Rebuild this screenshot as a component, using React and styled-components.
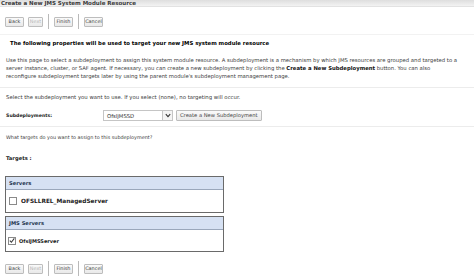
import React from "react";
import styled, { createGlobalStyle } from "styled-components";

const Global = createGlobalStyle`
  html, body { margin: 0; padding: 0; background: #fff; }
  body { font-family: "DejaVu Sans", Tahoma, sans-serif; color: #333; }
  * { box-sizing: border-box; }
`;

const Page = styled.div`
  width: 474px;
  height: 276px;
  overflow: hidden;
  display: flex;
  flex-direction: column;
`;

const TitleBar = styled.div`
  height: 11px;
  padding-left: 1px;
  display: flex;
  align-items: center;
  background: linear-gradient(#dedede, #f3f3f3);
  border-bottom: 1px solid #e2e2e2;
  font-size: 5.5px;
  font-weight: bold;
  color: #3a3a3a;
  white-space: nowrap;
`;

const ButtonBar = styled.div`
  display: flex;
  align-items: center;
  gap: 4px;
  padding: ${(p) => p.$pad};
`;

const Btn = styled.button`
  height: 10px;
  width: ${(p) => p.$w}px;
  padding: 0;
  font-family: inherit;
  font-size: 4.9px;
  line-height: 1;
  color: ${(p) => (p.disabled ? "#b5b5b5" : "#444")};
  background: linear-gradient(#fafafa, #e9e9e9);
  border: 1px solid #bdbdbd;
  border-radius: 1px;
  white-space: nowrap;
`;

const Sep = styled.span`
  width: 1px;
  height: 15px;
  margin: 0 1px;
  background: #b9b9b9;
`;

const Heading = styled.div`
  margin-top: 5px;
  padding: 5px 10px 5px;
  border-top: 1px solid #f2f2f2;
  font-size: 5.35px;
  font-weight: bold;
  color: #000;
  white-space: nowrap;
`;

const Body = styled.div`
  padding: 0 6px;
  display: flex;
  flex-direction: column;
`;

const Para = styled.div`
  margin-top: 5px;
  display: flex;
  flex-direction: column;
`;

const ParaLine = styled.div`
  font-size: 5.3px;
  line-height: 8px;
  height: 8px;
  color: #3b3b3b;
  white-space: nowrap;
`;

const Bold = styled.b`
  color: #111;
`;

const Divider = styled.div`
  height: 1px;
  background: #ececec;
  margin: ${(p) => p.$m};
`;

const Line = styled.div`
  font-size: ${(p) => p.$fs}px;
  line-height: 8px;
  color: #3b3b3b;
  white-space: nowrap;
  margin-top: ${(p) => p.$mt}px;
`;

const Label = styled.div`
  font-size: ${(p) => p.$fs}px;
  font-weight: bold;
  color: #222;
  line-height: 8px;
  margin-top: ${(p) => p.$mt || 0}px;
  width: ${(p) => p.$w || "auto"};
  white-space: nowrap;
`;

const FormRow = styled.div`
  display: flex;
  align-items: center;
  margin-top: 9px;
`;

const Select = styled.div`
  width: 70px;
  height: 11px;
  display: flex;
  align-items: stretch;
  border: 1px solid #c5c5c5;
  background: #fff;
  font-size: 5.3px;
  color: #333;
`;

const SelectText = styled.span`
  flex: 1;
  display: flex;
  align-items: center;
  padding-left: 3px;
`;

const SelectArrow = styled.span`
  width: 10px;
  border-left: 1px solid #c5c5c5;
  background: #f4f4f4;
  display: flex;
  align-items: center;
  justify-content: center;
`;

const WideBtn = styled(Btn)`
  height: 11px;
  width: auto;
  margin-left: 3px;
  padding: 0 3px;
  font-size: 5.2px;
`;

const Table = styled.div`
  width: 219px;
  margin-left: -1px;
  border: 1px solid #6a6a6a;
  display: flex;
  flex-direction: column;
  margin-top: ${(p) => p.$mt}px;
`;

const TableHead = styled.div`
  height: 13px;
  display: flex;
  align-items: center;
  padding-left: 3px;
  background: #d6e1f3;
  border-bottom: 1px solid #9aa7bb;
  font-size: 5.2px;
  font-weight: bold;
  color: #24354f;
`;

const TableRow = styled.div`
  height: ${(p) => p.$h}px;
  display: flex;
  align-items: center;
  gap: ${(p) => p.$gap}px;
  padding-left: ${(p) => p.$pl}px;
  font-size: ${(p) => p.$fs}px;
  font-weight: bold;
  color: #222;
`;

const Box = styled.span`
  width: 8px;
  height: 8px;
  border: 1px solid #8a8a8a;
  background: #fff;
  display: flex;
  align-items: center;
  justify-content: center;
`;

const Check = () => (
  <svg width="7" height="7" viewBox="0 0 7 7">
    <path d="M1 3.6 L2.8 5.6 L6.2 1" stroke="#3a3a3a" strokeWidth="1.2" fill="none" />
  </svg>
);

const Chevron = () => (
  <svg width="6" height="5" viewBox="0 0 6 5">
    <path d="M0.8 1.2 L3 3.6 L5.2 1.2" stroke="#333" strokeWidth="1.1" fill="none" />
  </svg>
);

const Buttons = ({ pad }) => (
  <ButtonBar $pad={pad}>
    <Btn $w={19}>Back</Btn>
    <Btn $w={15} disabled>Next</Btn>
    <Sep />
    <Btn $w={19}>Finish</Btn>
    <Sep />
    <Btn $w={19}>Cancel</Btn>
  </ButtonBar>
);

export default function App() {
  return (
    <Page>
      <Global />
      <TitleBar>Create a New JMS System Module Resource</TitleBar>
      <Buttons pad="7px 5px 0" />
      <Heading>The following properties will be used to target your new JMS system module resource</Heading>
      <Body>
        <Para>
          <ParaLine>Use this page to select a subdeployment to assign this system module resource. A subdeployment is a mechanism by which JMS resources are grouped and targeted to a</ParaLine>
          <ParaLine>server instance, cluster, or SAF agent. If necessary, you can create a new subdeployment by clicking the <Bold>Create a New Subdeployment</Bold> button. You can also</ParaLine>
          <ParaLine>reconfigure subdeployment targets later by using the parent module's subdeployment management page.</ParaLine>
        </Para>
        <Divider $m="7px -6px 0" />
        <Line $mt={5} $fs={5.35}>Select the subdeployment you want to use. If you select (none), no targeting will occur.</Line>
        <FormRow>
          <Label $w="97px" $fs={4.7}>Subdeployments:</Label>
          <Select>
            <SelectText>OfslJMSSD</SelectText>
            <SelectArrow><Chevron /></SelectArrow>
          </Select>
          <WideBtn>Create a New Subdeployment</WideBtn>
        </FormRow>
        <Divider $m="5px -6px 0" />
        <Line $mt={6} $fs={4.9}>What targets do you want to assign to this subdeployment?</Line>
        <Label $mt={13} $fs={5.2}>Targets :</Label>
        <Table $mt={14}>
          <TableHead>Servers</TableHead>
          <TableRow $h={22} $fs={5.8} $gap={4} $pl={3}>
            <Box />
            OFSLLREL_ManagedServer
          </TableRow>
        </Table>
        <Table $mt={3}>
          <TableHead>JMS Servers</TableHead>
          <TableRow $h={21} $fs={5} $gap={3} $pl={2}>
            <Box><Check /></Box>
            OfslJMSServer
          </TableRow>
        </Table>
      </Body>
      <Divider $m="5px 0 0" />
      <Buttons pad="4px 5px 0" />
    </Page>
  );
}
